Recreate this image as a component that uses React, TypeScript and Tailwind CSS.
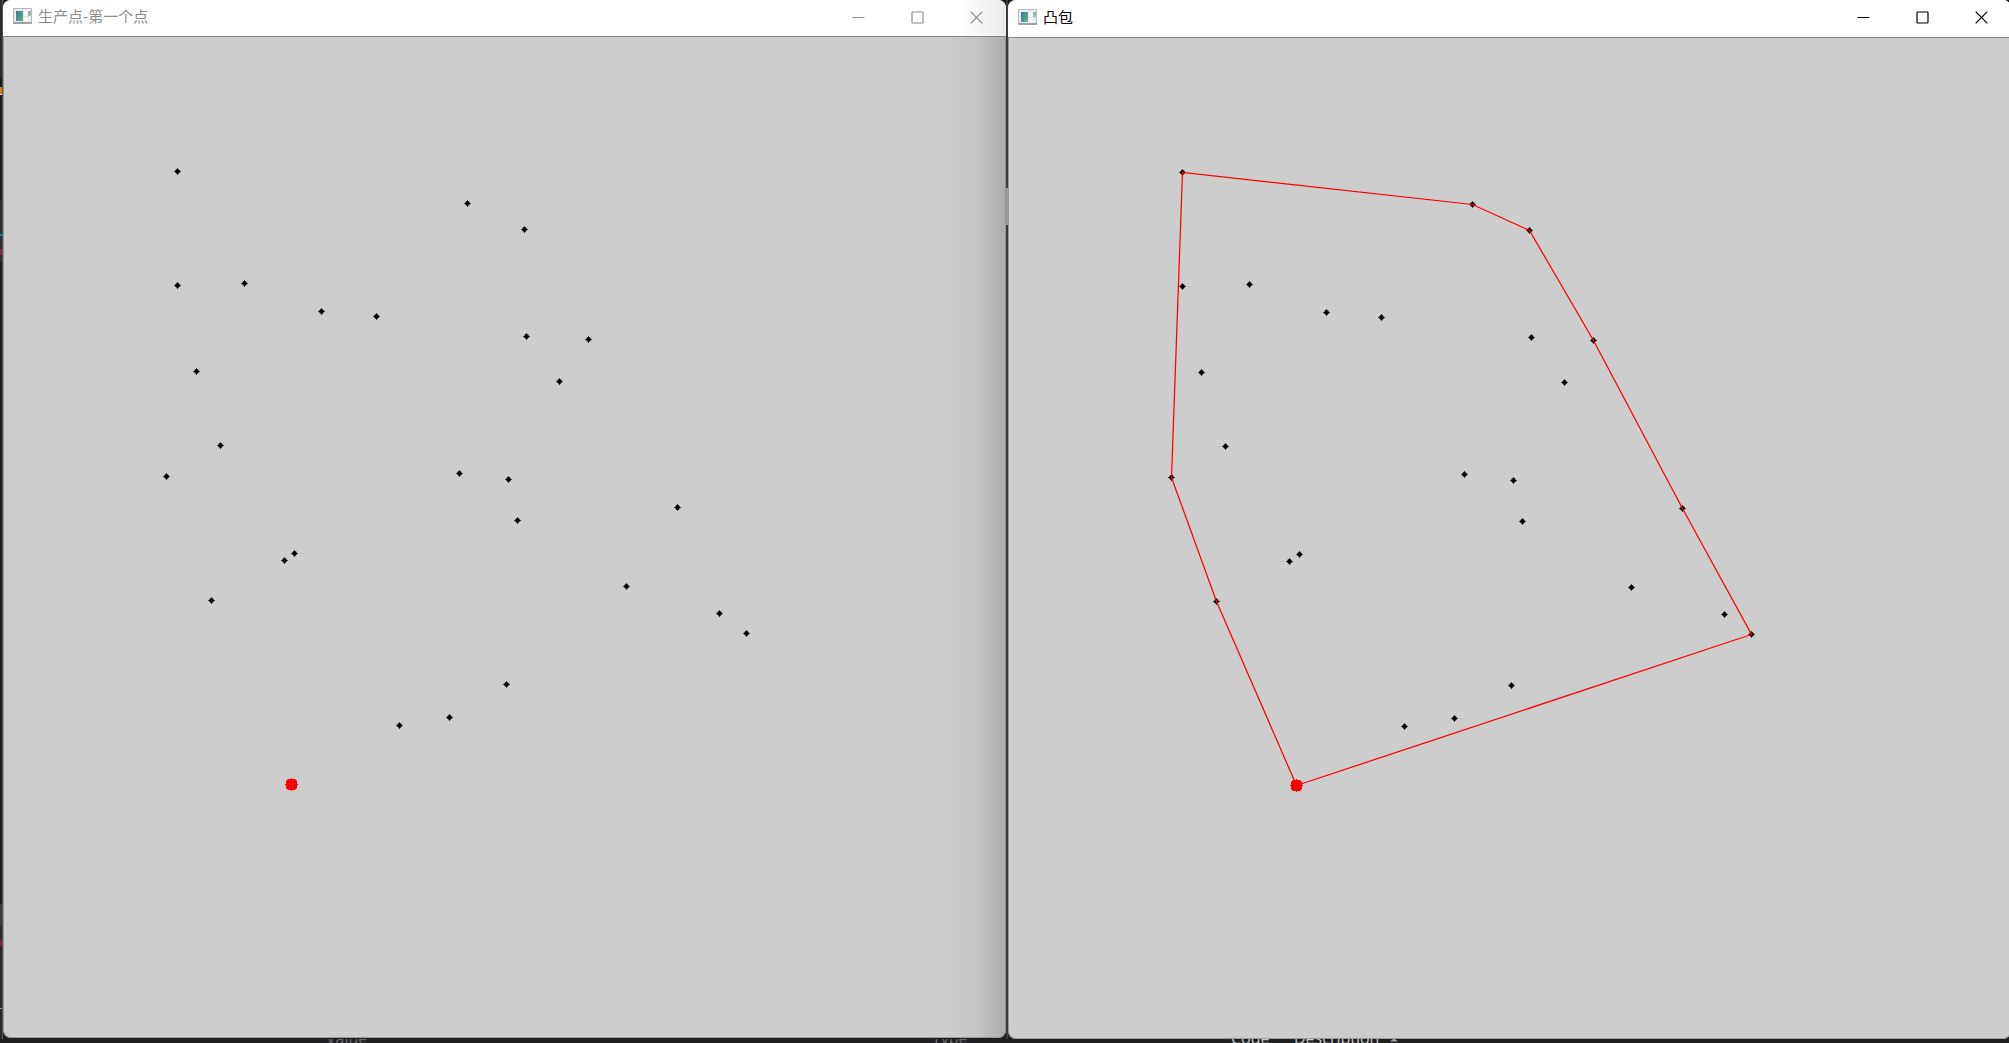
import React from 'react';

type Point = [number, number];

const POINTS: Point[] = [
    [173, 134], [463, 166], [520, 192], [173, 248], [240, 246],
    [317, 274], [372, 279], [522, 299], [584, 302], [192, 334],
    [555, 344], [216, 408], [162, 439], [455, 436], [504, 442],
    [673, 470], [513, 483], [290, 516], [280, 523], [207, 563],
    [622, 549], [715, 576], [742, 596], [502, 647], [445, 680],
    [395, 688],
];

const START: Point = [287, 747];

const HULL: Point[] = [
    [287, 747], [742, 596], [673, 470], [584, 302], [520, 192],
    [463, 166], [173, 134], [162, 439], [207, 563],
];

const AppIcon = () => (
    <svg viewBox="0 0 19 16" className="w-[19px] h-4 shrink-0" aria-hidden="true">
        <defs>
            <linearGradient id="screen" x1="0" y1="0" x2="1" y2="1">
                <stop offset="0" stopColor="#3f78a0" />
                <stop offset="1" stopColor="#5fb480" />
            </linearGradient>
        </defs>
        <rect x="0" y="0" width="19" height="16" rx="1" fill="#b4b8c0" />
        <rect x="1" y="1" width="17" height="13" fill="#e9ebee" />
        <rect x="0" y="14" width="19" height="2" rx="1" fill="#a0a4aa" />
        <rect x="3" y="3" width="7" height="10" fill="url(#screen)" />
        <rect x="11" y="3" width="4" height="10" fill="#f6f6f6" />
        <rect x="11" y="8" width="6" height="1" fill="#dcdee0" />
        <rect x="15" y="3" width="3" height="5" fill="url(#screen)" opacity="0.6" />
    </svg>
);

const MinimizeIcon = () => (
    <svg viewBox="0 0 13 13" className="w-[13px] h-[13px]" fill="none" stroke="currentColor">
        <path d="M0.5 6.5h12" />
    </svg>
);

const MaximizeIcon = () => (
    <svg viewBox="0 0 13 13" className="w-[13px] h-[13px]" fill="none" stroke="currentColor" strokeWidth="1.2">
        <rect x="1" y="1" width="11" height="11" rx="0.8" />
    </svg>
);

const CloseIcon = () => (
    <svg viewBox="0 0 13 13" className="w-[13px] h-[13px]" fill="none" stroke="currentColor" strokeWidth="1.2">
        <path d="M0.7 0.7l11.6 11.6M12.3 0.7L0.7 12.3" />
    </svg>
);

interface PlotProps {
    label: string;
    hull?: Point[];
}

const Plot: React.FC<PlotProps> = ({ label, hull }) => (
    <svg width="1000" height="1000" viewBox="-0.5 -0.5 1000 1000" className="block shrink-0" role="img" aria-label={label}>
        {POINTS.map(([x, y]) => (
            <g key={`${x}-${y}`} transform={`translate(${x} ${y})`}>
                <circle r="2.4" fill="#000" />
                <path d="M-3.5 0h7M0 -3.5v7" stroke="#000" strokeOpacity="0.7" />
            </g>
        ))}
        {hull && (
            <polygon points={hull.map((p) => p.join(',')).join(' ')} fill="none" stroke="#ff0000" strokeWidth="1.25" />
        )}
        <g transform={`translate(${START[0]} ${START[1]})`}>
            <path d="M-3.5 -5.5h7l2 2v7l-2 2h-7l-2 -2v-7z" fill="#ff0000" />
            <path d="M-6.5 0h13M0 -6.5v13" stroke="#ff0000" />
        </g>
    </svg>
);

interface PlotWindowProps {
    title: string;
    active?: boolean;
    hull?: Point[];
}

const PlotWindow: React.FC<PlotWindowProps> = ({ title, active, hull }) => (
    <section className={`relative flex-1 min-w-0 flex flex-col rounded-lg overflow-hidden bg-[#cdcdcd] ${active ? '' : 'mb-px'}`}>
        <header className={`relative flex items-center shrink-0 bg-white ${active ? 'h-[37px] text-black' : 'h-9 text-[#8c8c8c]'}`}>
            <div className="flex items-center gap-1.5 pl-2.5 pb-1">
                <AppIcon />
                <h1 className="text-[15px] leading-5 whitespace-nowrap">{title}</h1>
            </div>
            <div className="ml-auto flex self-stretch pb-0.5">
                <button type="button" aria-label="Minimize" className="w-[59px] flex items-center justify-center"><MinimizeIcon /></button>
                <button type="button" aria-label="Maximize" className="w-[59px] flex items-center justify-center"><MaximizeIcon /></button>
                <button type="button" aria-label="Close" className="w-[59px] flex items-center justify-center"><CloseIcon /></button>
            </div>
            {!active && <div className="absolute inset-y-0 right-0 w-12 bg-linear-to-r from-transparent to-black/8 pointer-events-none" />}
        </header>
        <div className="relative flex-1 min-h-0 overflow-hidden border border-t-[#858585] border-x-[#959595] border-b-[#9a9a9a] rounded-b-lg">
            <Plot label={title} hull={hull} />
            {/* shadow cast by the window in front */}
            {!active && <div className="absolute inset-y-0 right-0 w-14 bg-linear-to-r from-transparent via-black/4 to-black/16 pointer-events-none" />}
        </div>
    </section>
);

// Slice of the editor that shows left of the windows
const EditorEdge = () => (
    <div className="w-[3px] shrink-0 flex flex-col border-r border-[#555555] bg-[#1a1a1a]" aria-hidden="true">
        <div className="h-[78px] bg-[#2b2b2e]" />
        <div className="h-[9px]" />
        <div className="h-[7px] bg-[#c58216]" />
        <div className="h-px bg-[#e8dcc8]" />
        <div className="h-[105px]" />
        <div className="h-[34px] bg-[#2d2d33]" />
        <div className="h-0.5 bg-[#0a7cc0]" />
        <div className="h-[13px] bg-[#2d2d33]" />
        <div className="h-[6px] bg-[#8c2a3a]" />
        <div className="h-[7px] bg-[#2d2d33]" />
        <div className="h-[642px]" />
        <div className="h-[22px] bg-[#3c3c40]" />
        <div className="h-[14px] bg-[#2a2a2c]" />
        <div className="h-[6px] bg-[#7a2a2a]" />
        <div className="h-[62px] bg-[#2a2a2c]" />
        <div className="h-px bg-[#a09090]" />
        <div className="flex-1 bg-[#2a2a2c]" />
    </div>
);

const App: React.FC = () => (
    <main className="h-screen flex flex-col overflow-hidden bg-[#1f1f21] font-['Noto_Sans_CJK_SC',sans-serif]">
        <div className="flex-1 min-h-0 flex -mr-0.5">
            <EditorEdge />
            <PlotWindow title="生产点-第一个点" />
            <div className="w-0.5 shrink-0 bg-[#3a3a3a]" aria-hidden="true">
                <div className="mt-[188px] h-[37px] bg-[#9c9c9c]" />
            </div>
            <PlotWindow title="凸包" active hull={HULL} />
        </div>
        {/* Table header of the panel behind, only its last rows of pixels show */}
        <div className="h-1 shrink-0 flex items-end overflow-hidden text-base leading-[10px] text-[#6c6c70] font-['Open_Sans',sans-serif]">
            <span className="ml-[326px] w-[606px]">Value</span>
            <span className="w-[299px]">Type</span>
            <span className="w-[63px] text-[#c8c8c8]">Code</span>
            <span className="text-[#c8c8c8]">Description</span>
            <svg viewBox="0 0 10 4" className="ml-2.5 w-2.5 h-1" aria-hidden="true">
                <path d="M1 2.5L4 0h2l3 2.5z" fill="#a0a0a0" />
            </svg>
        </div>
    </main>
);

export default App;
